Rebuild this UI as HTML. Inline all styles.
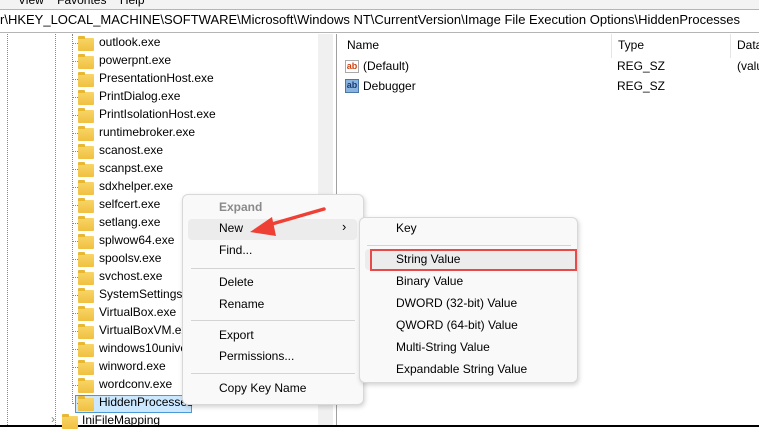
<!DOCTYPE html>
<html><head><meta charset="utf-8"><style>
*{margin:0;padding:0;box-sizing:border-box}
body{width:759px;height:427px;overflow:hidden;background:#fff;font-family:"Segoe UI","Liberation Sans",sans-serif;font-size:12px;color:#000;position:relative}
.a{position:absolute;white-space:nowrap}
.fold{position:absolute;width:16px;height:13px;background:linear-gradient(#f8d568,#f0c040);border-radius:1px}
.fold:before{content:"";position:absolute;left:0;top:-2px;width:7px;height:3px;background:#e8b830;border-radius:1px 1px 0 0}
.dv{position:absolute;border-left:1px dotted #888}
.dh{position:absolute;border-top:1px dotted #888;width:6px}
.menu{position:absolute;background:#f9f9f9;border:1px solid #d8d8d8;border-radius:6px;box-shadow:1px 2px 5px rgba(0,0,0,.18)}
.sep{position:absolute;height:1px;background:#d4d4d4}
</style></head><body>
<div class="a" style="left:0;top:0;width:759px;height:9px;background:#f3f3f3"></div>
<div class="a" style="left:18px;top:-7px;font-size:12px">View&nbsp;&nbsp;&nbsp;&nbsp;Favorites&nbsp;&nbsp;&nbsp;&nbsp;Help</div>
<div class="a" style="left:0;top:9px;width:759px;height:24px;border-top:1px solid #b5b5b5;border-bottom:1px solid #b5b5b5;background:#fff"></div>
<div class="a" style="left:0;top:12px;font-size:13px">r\HKEY_LOCAL_MACHINE\SOFTWARE\Microsoft\Windows NT\CurrentVersion\Image File Execution Options\HiddenProcesses</div>
<div class="a" style="left:318px;top:34px;width:15px;height:391px;background:#f0f0f0"></div>
<div class="a" style="left:336px;top:34px;width:1px;height:391px;background:#a0a0a0"></div>
<div class="a" style="left:0;top:425px;width:759px;height:2px;background:#000"></div>
<div class="dv" style="left:7px;top:34px;height:391px"></div>
<div class="dv" style="left:55px;top:34px;height:391px"></div>
<div class="dv" style="left:72px;top:34px;height:370px"></div>
<div class="a" style="left:75px;top:395px;width:117px;height:18px;background:#cce8ff;border:1px solid #4a9ad8"></div>
<div id="tree"></div>
<div class="a" style="left:51px;top:412px;color:#888;font-size:12px">›</div>
<div class="fold" style="left:62px;top:416px"></div>
<div class="a" style="left:82px;top:413px;font-size:12px">IniFileMapping</div>
<div class="a" style="left:347px;top:38px;font-size:12px">Name</div>
<div class="a" style="left:611px;top:34px;width:1px;height:24px;background:#e5e5e5"></div>
<div class="a" style="left:730px;top:34px;width:1px;height:24px;background:#e5e5e5"></div>
<div class="a" style="left:618px;top:38px">Type</div>
<div class="a" style="left:737px;top:38px">Data</div>
<div class="a" style="left:345px;top:60px;width:14px;height:13px;border:1px solid #aaa;background:#fff;color:#d04010;font-size:9px;font-weight:bold;line-height:10px;text-align:center">ab</div>
<div class="a" style="left:363px;top:59px">(Default)</div>
<div class="a" style="left:617px;top:59px">REG_SZ</div>
<div class="a" style="left:737px;top:59px">(valu</div>
<div class="a" style="left:345px;top:79px;width:14px;height:14px;border:1px solid #4a78a8;background:#8ab4e0;color:#1a3a70;font-size:9px;font-weight:bold;line-height:11px;text-align:center">ab</div>
<div class="a" style="left:363px;top:79px">Debugger</div>
<div class="a" style="left:617px;top:79px">REG_SZ</div>
<div class="menu" style="left:182px;top:194px;width:182px;height:211px"></div>
<div class="a" style="left:188px;top:219px;width:169px;height:21px;background:#ececec;border-radius:4px"></div>
<div class="a" style="left:219px;top:200px;color:#8a8a8a;font-weight:bold">Expand</div>
<div class="a" style="left:219px;top:221px">New</div>
<div class="a" style="left:342px;top:219px;font-size:13px">›</div>
<div class="a" style="left:219px;top:243px">Find...</div>
<div class="sep" style="left:191px;top:268px;width:164px"></div>
<div class="a" style="left:219px;top:275px">Delete</div>
<div class="a" style="left:219px;top:297px">Rename</div>
<div class="sep" style="left:191px;top:320px;width:164px"></div>
<div class="a" style="left:219px;top:328px">Export</div>
<div class="a" style="left:219px;top:349px">Permissions...</div>
<div class="sep" style="left:191px;top:373px;width:164px"></div>
<div class="a" style="left:219px;top:381px">Copy Key Name</div>
<div class="menu" style="left:359px;top:217px;width:219px;height:166px"></div>
<div class="a" style="left:396px;top:221px">Key</div>
<div class="sep" style="left:367px;top:245px;width:204px"></div>
<div class="a" style="left:365px;top:249px;width:212px;height:21px;background:#ececec;border-radius:4px"></div>
<div class="a" style="left:370px;top:249px;width:207px;height:22px;border:2px solid #e84a4a"></div>
<div class="a" style="left:396px;top:252px">String Value</div>
<div class="a" style="left:396px;top:274px">Binary Value</div>
<div class="a" style="left:396px;top:296px">DWORD (32-bit) Value</div>
<div class="a" style="left:396px;top:318px">QWORD (64-bit) Value</div>
<div class="a" style="left:396px;top:340px">Multi-String Value</div>
<div class="a" style="left:396px;top:362px">Expandable String Value</div>
<svg class="a" style="left:240px;top:200px" width="100" height="45"><line x1="84" y1="9" x2="25" y2="26" stroke="#ee4035" stroke-width="3.5" stroke-linecap="round"/><polygon points="10,32 32,17 36,36" fill="#ee4035"/></svg>
<script>
var n=["outlook.exe","powerpnt.exe","PresentationHost.exe","PrintDialog.exe","PrintIsolationHost.exe","runtimebroker.exe","scanost.exe","scanpst.exe","sdxhelper.exe","selfcert.exe","setlang.exe","splwow64.exe","spoolsv.exe","svchost.exe","SystemSettings.exe","VirtualBox.exe","VirtualBoxVM.exe","windows10universal","winword.exe","wordconv.exe","HiddenProcesses"],h="";
for(var i=0;i<n.length;i++){var y=43+i*18;h+='<div class="dh" style="left:72px;top:'+y+'px"></div><div class="fold" style="left:78px;top:'+(y-5)+'px"></div><div class="a" style="left:99px;top:'+(y-8)+'px">'+n[i]+'</div>';}
document.getElementById("tree").innerHTML=h;
</script>
</body></html>
